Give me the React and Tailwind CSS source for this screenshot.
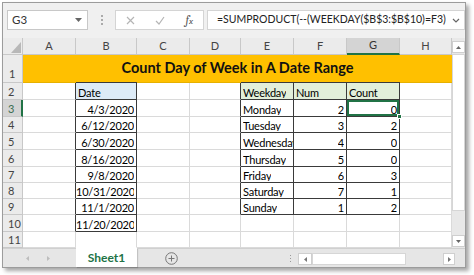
import React from 'react'

const COLS = [
  { k: 'A', w: 'w-[53px]' },
  { k: 'B', w: 'w-[61px]' },
  { k: 'C', w: 'w-[53px]' },
  { k: 'D', w: 'w-[51px]' },
  { k: 'E', w: 'w-[53px]' },
  { k: 'F', w: 'w-[53px]' },
  { k: 'G', w: 'w-[53px]' },
  { k: 'H', w: 'w-[52px]' },
]

const ROWS = [
  [2, 'h-[17px]'],
  [3, 'h-[17px]'],
  [4, 'h-[16px]'],
  [5, 'h-[17px]'],
  [6, 'h-[17px]'],
  [7, 'h-[16px]'],
  [8, 'h-[16px]'],
  [9, 'h-[16px]'],
  [10, 'h-[17px]'],
  [11, 'h-[16px]'],
]

const DATA = {
  B2: 'Date', E2: 'Weekday', F2: 'Num', G2: 'Count',
  B3: '4/3/2020', B4: '6/12/2020', B5: '6/30/2020', B6: '8/16/2020',
  B7: '9/8/2020', B8: '10/31/2020', B9: '11/1/2020', B10: '11/20/2020',
  E3: 'Monday', E4: 'Tuesday', E5: 'Wednesday', E6: 'Thursday', E7: 'Friday', E8: 'Saturday', E9: 'Sunday',
  F3: '2', F4: '3', F5: '4', F6: '5', F7: '6', F8: '7', F9: '1',
  G3: '0', G4: '2', G5: '0', G6: '0', G7: '3', G8: '1', G9: '2',
}

// cells that carry the black table border
const inTable = (r, c) =>
  (c === 'B' && r >= 2 && r <= 10) || (['E', 'F', 'G'].includes(c) && r >= 2 && r <= 9)

function Cell({ r, c, i }) {
  const key = c.k + r
  const v = DATA[key]
  const next = COLS[i + 1]?.k
  const rDark = inTable(r, c.k) || (next && inTable(r, next))
  const bDark = inTable(r, c.k) || inTable(r + 1, c.k)
  const left = r === 2 || c.k === 'E'
  const fill = key === 'B2' ? 'bg-[#ddebf7]' : r === 2 && inTable(r, c.k) ? 'bg-[#e2efda]' : 'bg-white'
  const selected = key === 'G3'
  // the active sheet tab sits right under B11, so no gridline there
  const bottom = r === 11 && c.k === 'B' ? 'border-b-white' : bDark ? 'border-b-[#3a3a3a]' : 'border-b-[#dadada]'

  return (
    <div
      className={`${c.w} shrink-0 relative flex items-end pb-[1px] border-r border-b overflow-visible ${
        rDark ? 'border-r-[#3a3a3a]' : 'border-r-[#dadada]'
      } ${bottom} ${fill} ${left ? 'justify-start pl-[2px]' : 'justify-end pr-[2px]'} ${
        selected ? 'shadow-[inset_0_0_0_2px_#217346]' : ''
      }`}
    >
      {v && (
        <span className="text-[11px] tracking-[-0.2px] leading-none text-black whitespace-nowrap overflow-hidden">
          {v}
        </span>
      )}
      {selected && (
        <div className="absolute -right-[3px] -bottom-[3px] w-[5px] h-[5px] bg-[#217346] border border-white z-10" />
      )}
    </div>
  )
}

function App() {
  return (
    <div className="w-[474px] h-[275px] bg-white pl-[2px] pt-[2px] overflow-hidden font-['Lato',sans-serif]">
      <div className="w-[464px] h-[266px] border border-[#9c9c9c] bg-[#f0f0f0] shadow-[3px_3px_4px_rgba(0,0,0,0.35)] flex flex-col">
        {/* formula bar */}
        <div className="h-[35px] flex items-start pt-[7px] pl-[4px]">
          <div className="w-[81px] shrink-0 h-[20px] bg-white border border-[#c8c8c8] flex items-center justify-between pl-[4px] pr-[5px]">
            <span className="text-[11.5px] text-[#333]">G3</span>
            <svg width="7" height="4" viewBox="0 0 7 4"><path d="M0 0h7L3.5 4z" fill="#666" /></svg>
          </div>
          <div className="w-[27px] shrink-0 h-[20px] flex flex-col items-center justify-center gap-[2px]">
            <span className="w-[2px] h-[2px] bg-[#aaa]" />
            <span className="w-[2px] h-[2px] bg-[#aaa]" />
            <span className="w-[2px] h-[2px] bg-[#aaa]" />
          </div>
          <div className="w-[89px] shrink-0 h-[20px] bg-white border border-[#d4d4d4] flex items-center justify-around">
            <svg width="9" height="9" viewBox="0 0 9 9"><path d="M1 1l7 7M8 1l-7 7" stroke="#b5b5b5" strokeWidth="1.2" /></svg>
            <svg width="10" height="9" viewBox="0 0 10 9"><path d="M1 5l3 3 5-7" stroke="#b5b5b5" strokeWidth="1.2" fill="none" /></svg>
            <span className="text-[12px] italic font-serif text-[#555] leading-none">f<span className="text-[9px]">x</span></span>
          </div>
          <div className="ml-[3px] flex-1 min-w-0 overflow-hidden h-[20px] bg-white border border-[#d4d4d4] flex items-center justify-between pl-[9px] pr-[4px]">
            <span className="text-[10.5px] text-[#222] whitespace-nowrap">=SUMPRODUCT(--(WEEKDAY($B$3:$B$10)=F3)</span>
            <svg width="8" height="5" viewBox="0 0 8 5" className="shrink-0"><path d="M1 1l3 3 3-3" stroke="#666" strokeWidth="1.2" fill="none" /></svg>
          </div>
        </div>

        {/* sheet */}
        <div className="flex">
          <div className="flex flex-col">
            {/* column headers */}
            <div className="h-[17px] flex bg-[#ebebeb]">
              <div className="w-[20px] shrink-0 border-r border-b border-[#c8c8c8] flex items-end justify-end pr-[1px] pb-[1px]">
                <svg width="10" height="11" viewBox="0 0 10 11"><path d="M10 0v11H0z" fill="#b8b8b8" /></svg>
              </div>
              {COLS.map((c) => (
                <div
                  key={c.k}
                  className={`${c.w} shrink-0 flex items-center justify-center border-r border-[#c8c8c8] text-[11px] ${
                    c.k === 'G'
                      ? 'bg-[#d4d4d4] border-b-2 border-b-[#217346] text-[#333]'
                      : 'border-b text-[#444]'
                  }`}
                >
                  {c.k}
                </div>
              ))}
            </div>

            {/* row 1 title */}
            <div className="flex">
              <div className="w-[20px] shrink-0 h-[28px] bg-[#ebebeb] border-r border-b border-[#c8c8c8] flex items-end pl-[6px] pb-[3px] text-[11px] text-[#444] leading-none">
                1
              </div>
              <div className="flex flex-col">
                <div className="h-[27px] w-[429px] bg-[#ffc000] flex items-center justify-center">
                  <span className="text-[14.5px] font-bold text-[#111] leading-none">Count Day of Week in A Date Range</span>
                </div>
                <div className="flex h-[1px]">
                  {COLS.map((c) => (
                    <div key={c.k} className={`${c.w} shrink-0 ${inTable(2, c.k) ? 'bg-[#3a3a3a]' : 'bg-[#e6b000]'}`} />
                  ))}
                </div>
              </div>
            </div>

            {/* rows 2-11 */}
            {ROWS.map(([r, h]) => (
              <div key={r} className={`flex ${h}`}>
                <div
                  className={`w-[20px] shrink-0 border-b border-[#c8c8c8] flex items-center pl-[5px] text-[11px] leading-none ${
                    r === 3
                      ? 'bg-[#d4d4d4] border-r-2 border-r-[#217346] text-[#3b6e52]'
                      : 'bg-[#ebebeb] border-r text-[#444]'
                  }`}
                >
                  {r}
                </div>
                {COLS.map((c, i) => (
                  <Cell key={c.k} r={r} c={c} i={i} />
                ))}
              </div>
            ))}
          </div>

          {/* vertical scrollbar */}
          <div className="w-[13px] flex flex-col bg-[#e8e8e8] pt-[3px] pb-[1px]">
            <div className="h-[12px] bg-white border border-[#cfcfcf] flex items-center justify-center">
              <svg width="5" height="3" viewBox="0 0 5 3"><path d="M0 3h5L2.5 0z" fill="#666" /></svg>
            </div>
            <div className="flex-1 mt-[1px] mb-[24px] bg-white border border-[#d6d6d6]" />
            <div className="h-[12px] bg-white border border-[#cfcfcf] flex items-center justify-center">
              <svg width="5" height="3" viewBox="0 0 5 3"><path d="M0 0h5L2.5 3z" fill="#666" /></svg>
            </div>
          </div>
        </div>

        {/* sheet tabs + horizontal scrollbar */}
        <div className="h-[19px] flex bg-[#e6e6e6]">
          <div className="w-[73px] shrink-0 flex items-center pl-[23px] gap-[18px] border-t border-[#d0d0d0]">
            <svg width="3" height="5" viewBox="0 0 3 5"><path d="M3 0v5L0 2.5z" fill="#bdbdbd" /></svg>
            <svg width="3" height="5" viewBox="0 0 3 5"><path d="M0 0v5l3-2.5z" fill="#bdbdbd" /></svg>
          </div>
          <div className="w-[61px] shrink-0 bg-white flex items-center justify-center shadow-[1px_1px_1px_rgba(0,0,0,0.15)]">
            <span className="text-[12px] font-bold text-[#217346] leading-none">Sheet1</span>
          </div>
          <div className="w-[145px] shrink-0 flex items-center pl-[28px] border-t border-[#d0d0d0]">
            <svg width="13" height="13" viewBox="0 0 13 13">
              <circle cx="6.5" cy="6.5" r="5.8" stroke="#777" fill="none" />
              <path d="M6.5 3.5v6M3.5 6.5h6" stroke="#777" />
            </svg>
          </div>
          <div className="w-[16px] shrink-0 flex flex-col items-center justify-center gap-[2px] border-t border-[#d0d0d0]">
            <span className="w-[1px] h-[1px] bg-[#999]" />
            <span className="w-[1px] h-[1px] bg-[#999]" />
            <span className="w-[1px] h-[1px] bg-[#999]" />
          </div>
          <div className="w-[157px] shrink-0 flex items-start pt-[4px] border-t border-[#d0d0d0]">
            <div className="w-[14px] h-[12px] bg-white border border-[#cfcfcf] flex items-center justify-center">
              <svg width="3" height="5" viewBox="0 0 3 5"><path d="M3 0v5L0 2.5z" fill="#777" /></svg>
            </div>
            <div className="w-[94px] h-[12px] bg-white border border-[#d6d6d6]" />
            <div className="flex-1 h-[12px]" />
            <div className="w-[12px] h-[12px] bg-white border border-[#cfcfcf] flex items-center justify-center">
              <svg width="3" height="5" viewBox="0 0 3 5"><path d="M0 0v5l3-2.5z" fill="#777" /></svg>
            </div>
          </div>
          <div className="flex-1 border-t border-[#d0d0d0]" />
        </div>
      </div>
    </div>
  )
}

export default App
